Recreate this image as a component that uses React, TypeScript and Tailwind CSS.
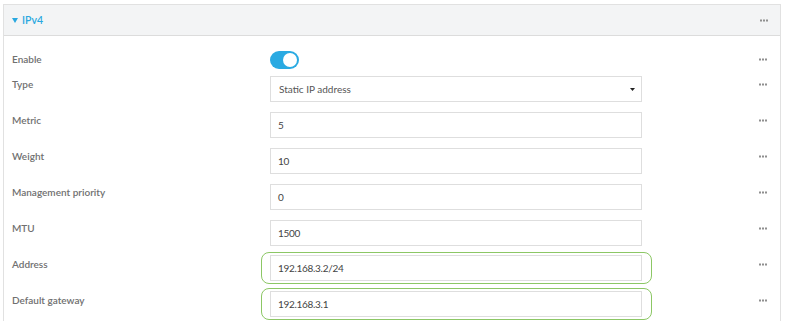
import React from "react";

const Dots = () => (
  <svg width="8" height="3" viewBox="0 0 8 3" className="block">
    <rect x="0" y="0.5" width="2" height="2" fill="#8f8f8f" />
    <rect x="3" y="0.5" width="2" height="2" fill="#8f8f8f" />
    <rect x="6" y="0.5" width="2" height="2" fill="#8f8f8f" />
  </svg>
);

type Row = { label: string; value: string; hl?: boolean; select?: boolean };

const rows: Row[] = [
  { label: "Type", value: "Static IP address", select: true },
  { label: "Metric", value: "5" },
  { label: "Weight", value: "10" },
  { label: "Management priority", value: "0" },
  { label: "MTU", value: "1500" },
  { label: "Address", value: "192.168.3.2/24", hl: true },
  { label: "Default gateway", value: "192.168.3.1", hl: true },
];

export default function App() {
  return (
    <div className="bg-white w-[785px] h-[321px] overflow-hidden pt-[4px] pl-[3px]" style={{ fontFamily: "Lato, 'Open Sans', sans-serif" }}>
      <div className="w-[778px] border border-[#e1e1e1] pb-[40px]">
        <div className="h-[31px] bg-[#f3f4f5] border-b border-[#dcdcdc] flex items-center pl-[8px]">
          <svg width="6" height="5" viewBox="0 0 6 5" className="mr-[4px] mt-[1px]">
            <path d="M0 0 L6 0 L3 5 Z" fill="#29a8e0" />
          </svg>
          <span className="text-[10.5px] font-semibold text-[#29a8e0] leading-[12px]">IPv4</span>
          <div className="ml-auto mr-[12px]"><Dots /></div>
        </div>

        <div className="flex h-[36px] items-start">
          <div className="w-[257px] pl-[8px] mt-[17px] text-[10px] font-semibold leading-[12px] text-[#707070]">Enable</div>
          <div className="w-[391px] pl-[9px] mt-[15px]">
            <div className="w-[29px] h-[18px] rounded-full bg-[#2aaae2] flex items-center justify-end pr-[2px]">
              <div className="w-[14px] h-[14px] rounded-full bg-white" />
            </div>
          </div>
          <div className="ml-[107px] mt-[22px]"><Dots /></div>
        </div>

        {rows.map((r) => (
          <div key={r.label} className="flex h-[36px] items-start">
            <div className="w-[257px] pl-[8px] mt-[6px] text-[10px] font-semibold leading-[12px] text-[#707070]">{r.label}</div>
            <div
              className={
                r.hl
                  ? "w-[391px] h-[32px] border border-[#8cc765] rounded-[8px] pl-[8px] pr-[9px] pt-[2px]"
                  : "w-[391px] h-[32px] border border-transparent pl-[8px] pr-[9px] pt-[3px]"
              }
            >
              <div className="h-[26px] border border-[#dedede] bg-white flex items-center pl-[7px] pr-[6px] text-[10px] text-[#444]">
                <span className={r.select ? "pl-[1px] text-[#555]" : "tracking-[-0.3px]"}>{r.value}</span>
                {r.select && (
                  <svg width="5" height="3" viewBox="0 0 5 3" className="ml-auto">
                    <path d="M0 0 L5 0 L2.5 3 Z" fill="#222" />
                  </svg>
                )}
              </div>
            </div>
            <div className="ml-[107px] mt-[11px]"><Dots /></div>
          </div>
        ))}
      </div>
    </div>
  );
}
